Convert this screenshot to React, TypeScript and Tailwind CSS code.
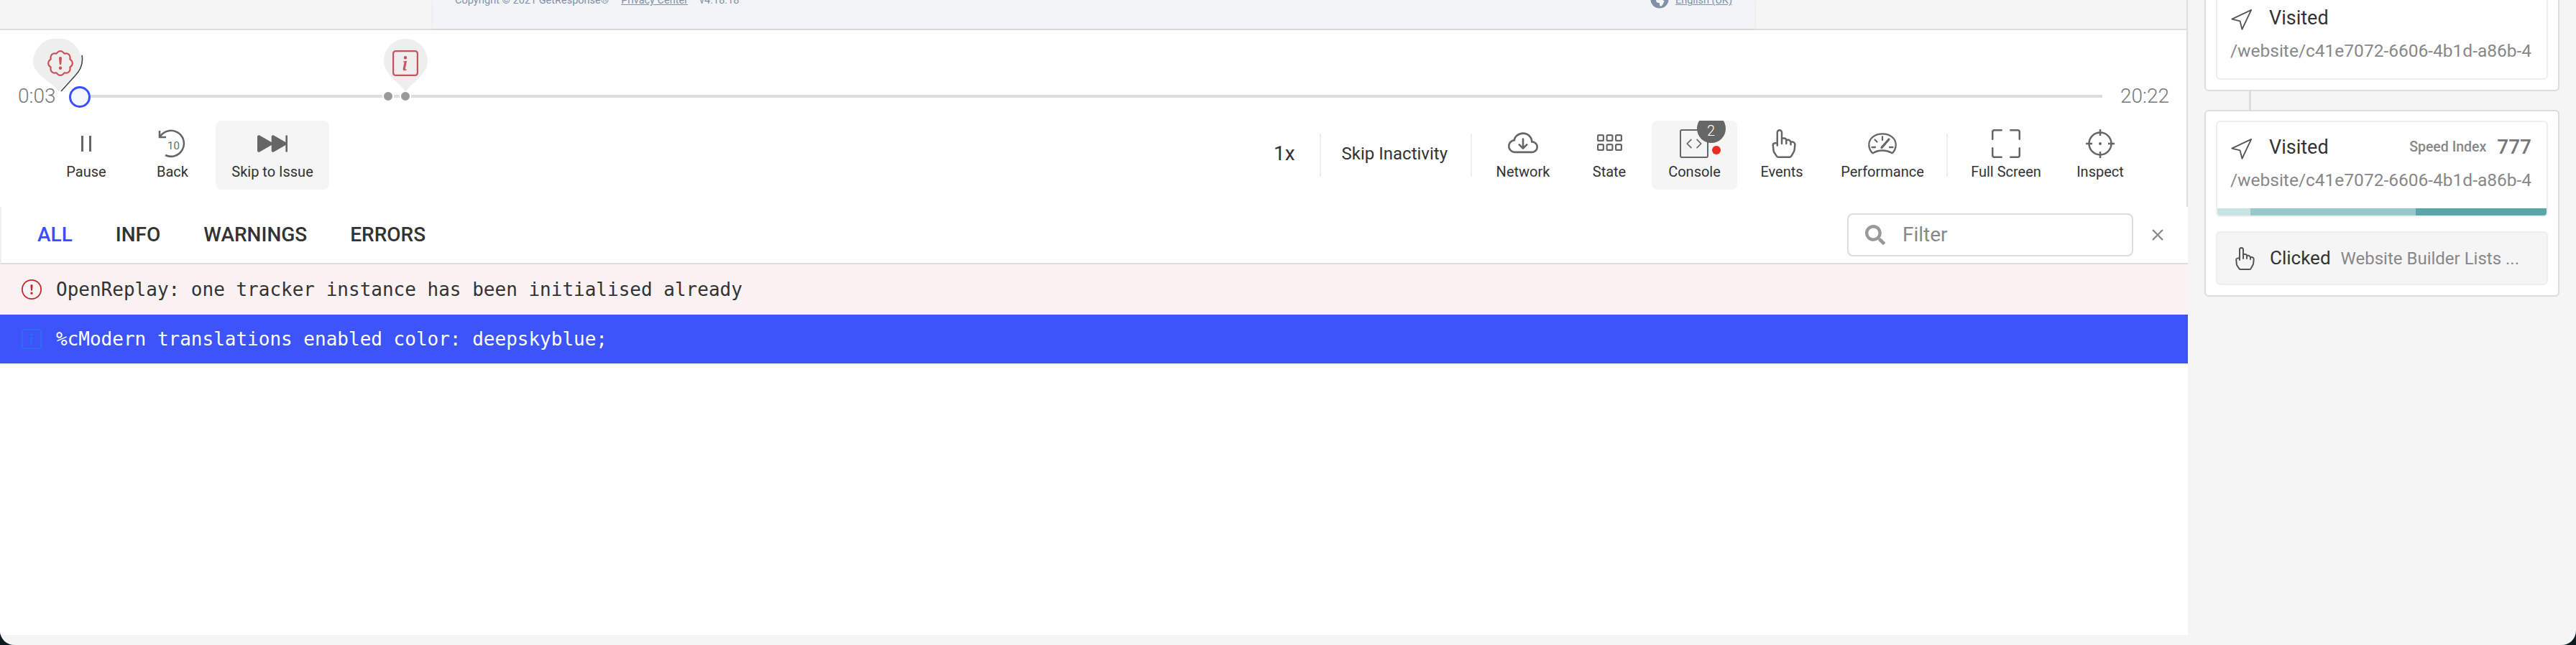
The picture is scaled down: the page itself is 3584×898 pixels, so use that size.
import React from 'react';
import { BsCloudArrowDown, BsCode, BsExclamationCircle, BsFullscreen, BsHandIndex, BsInfoSquare, BsPatchExclamation, BsSkipForwardFill, BsX } from 'react-icons/bs';
import { FaGlobeAfrica, FaSearch } from 'react-icons/fa';
import { Navigation } from 'lucide-react';

const Separator = ({ className }: { className: string }) => <div className={`w-[2px] h-[60px] bg-[#eee] shrink-0 ${className}`} />;

const ControlButton = ({ label, icon, className, active }: { label: string; icon: React.ReactNode; className: string; active?: boolean }) => (
    <div className={`relative overflow-hidden h-[96px] flex flex-col items-center shrink-0 rounded-[8px] ${active ? 'bg-[#f5f5f5]' : ''} ${className}`}>
        <div className="h-[40px] mt-[12px] flex items-center justify-center text-[#666]">{icon}</div>
        <div className="text-[20px] leading-[24px] mt-[7px] text-[#333] whitespace-nowrap">{label}</div>
    </div>
);

const BackIcon = () => (
    <svg width="40" height="40" viewBox="0 0 40 40" fill="none" stroke="#666" strokeWidth="2.6">
        <path d="M2 2v9h9" />
        <path d="M2.5 10.5A18 18 0 1 1 10 36" />
        <text x="21.5" y="28" fontSize="15" fill="#666" stroke="none" textAnchor="middle" fontFamily="Roboto, sans-serif">10</text>
    </svg>
);

const InspectIcon = () => (
    <svg width="40" height="40" viewBox="0 0 40 40" fill="none" stroke="#666" strokeWidth="2.5">
        <circle cx="20" cy="20" r="15.5" />
        <path d="M20 0v9M20 31v9M0 20h9M31 20h9" />
        <circle cx="20" cy="20" r="2" fill="#666" stroke="none" />
    </svg>
);

const StateIcon = () => (
    <svg width="35" height="23" viewBox="0 0 35 23" fill="none" stroke="#666" strokeWidth="2.2" className="-mt-[3px]">
        <rect x="1.1" y="1.1" width="7.8" height="7.8" rx="1.5" />
        <rect x="13.6" y="1.1" width="7.8" height="7.8" rx="1.5" />
        <rect x="26.1" y="1.1" width="7.8" height="7.8" rx="1.5" />
        <rect x="1.1" y="14.1" width="7.8" height="7.8" rx="1.5" />
        <rect x="13.6" y="14.1" width="7.8" height="7.8" rx="1.5" />
        <rect x="26.1" y="14.1" width="7.8" height="7.8" rx="1.5" />
    </svg>
);

const PerformanceIcon = () => (
    <svg width="40" height="30" viewBox="0 0 40 30" fill="none" stroke="#666" strokeWidth="2.3" strokeLinecap="round" className="-mt-[1px]">
        <path d="M5.5 27.5C2.5 24 1.3 20 1.3 16.5 1.3 7.5 9.5 1.3 20 1.3S38.7 7.5 38.7 16.5c0 3.5-1.2 7.5-4.2 11-.6.7-1.6.5-2.4.1C28.5 25.5 24.5 24.5 20 24.5s-8.5 1-12 3.1c-.8.4-1.8.6-2.5-.1Z" />
        <path d="M20 5.5v4.5M9.5 9.5l3 3M5.5 20h4.5M30 20h4.5" />
        <path d="M19 20.5L29 9" strokeWidth="3.2" />
    </svg>
);

const Dot = ({ className }: { className: string }) => <div className={`absolute top-[-6px] w-[16px] h-[16px] rounded-full bg-[#999] border-2 border-white ${className}`} />;

const VisitedHead = ({ children }: { children?: React.ReactNode }) => (
    <div className="pl-[18px] pr-[21px] pt-[18px] shrink-0">
        <div className="h-[34px] flex items-center">
            <Navigation size={34} strokeWidth={1.3} className="text-[#555] shrink-0 -ml-[2px] mt-[6px]" />
            <span className="text-[27px] text-[#333] ml-[22px]">Visited</span>
            {children}
        </div>
        <div className="mt-[12px] h-[34px] leading-[34px] text-[24.5px] text-[#888] whitespace-nowrap overflow-hidden">/website/c41e7072-6606-4b1d-a86b-4</div>
    </div>
);

export default function App() {
    return (
        <div className="w-[3584px] h-[898px] bg-[#0b1a20] overflow-hidden font-['Roboto',sans-serif]">
            <div className="h-full flex bg-[#f5f5f5] rounded-b-[20px] overflow-hidden">
                <div className="w-[3044px] h-[884px] flex flex-col bg-white shrink-0">
                    {/* replayed page, only its footer is visible */}
                    <div className="h-[42px] shrink-0 bg-[#f5f5f5] border-b-2 border-r-2 border-[#ddd] pl-[602px]">
                        <div className="w-[1839px] h-full bg-[#f2f4f8] overflow-hidden shadow-[0_0_4px_rgba(0,0,0,0.08)] flex justify-between items-start pl-[31px] pr-[31px] text-[14.5px] leading-[16px] text-[#8091a5]">
                            <div className="flex -mt-[7px] h-[16px]">
                                <span>Copyright © 2021 GetResponse®</span>
                                <span className="underline ml-[17px]">Privacy Center</span>
                                <span className="ml-[16px]">v4.18.18</span>
                            </div>
                            <div className="flex items-start">
                                <FaGlobeAfrica size={26} className="-mt-[14px]" />
                                <span className="underline ml-[9px] -mt-[7px]">English (UK)</span>
                            </div>
                        </div>
                    </div>

                    {/* player */}
                    <div className="relative h-[246px] shrink-0 border-r-2 border-[#ddd]">
                        <div className="h-[126px] pt-[76px]">
                            <div className="flex items-center h-[32px] pl-[25px] pr-[24px]">
                                <div className="w-[71px] text-[28px] leading-[32px] font-light text-[#777] shrink-0">0:03</div>
                                <div className="w-[30px] h-[30px] rounded-full bg-[#f3f5ff] border-[3px] border-[#394eff] shrink-0 mt-[2px]" />
                                <div className="relative flex-1 h-[4px] bg-[#ddd]">
                                    <Dot className="left-[406px]" />
                                    <Dot className="left-[430px]" />
                                </div>
                                <div className="ml-[25px] text-[28px] leading-[32px] font-light text-[#777] shrink-0">20:22</div>
                            </div>
                        </div>
                        <div className="absolute left-[46px] top-[12px] w-[70px] h-[74px]">
                            <svg width="70" height="74" viewBox="0 0 70 74">
                                <path d="M36 73C28 62 0 50 0 32A33 32 0 0 1 68 32C68 50 44 62 36 73Z" fill="#eee" />
                                <path d="M68 23C70 34 66 44 58 52L39 73" fill="none" stroke="#444" strokeWidth="1.6" />
                            </svg>
                            <BsPatchExclamation size={36} className="absolute left-[20px] top-[16px] text-[#c9535a]" />
                        </div>
                        <div className="absolute left-[534px] top-[12px] w-[61px] h-[74px]">
                            <svg width="61" height="74" viewBox="0 0 61 74">
                                <path d="M30.5 74C24 62 0 50 0 31A30.5 31 0 0 1 61 31C61 50 37 62 30.5 74Z" fill="#eee" />
                            </svg>
                            <BsInfoSquare size={36} className="absolute left-[12px] top-[16px] text-[#c9535a]" />
                        </div>

                        <div className="flex h-[96px] pl-[70px] pr-[61px]">
                            <ControlButton
                                label="Pause"
                                className="w-[100px]"
                                icon={
                                    <div className="flex gap-[8px] h-[22px]">
                                        <div className="w-[3px] bg-[#666]" />
                                        <div className="w-[3px] bg-[#666]" />
                                    </div>
                                }
                            />
                            <ControlButton label="Back" className="w-[88px] ml-[26px]" icon={<BackIcon />} />
                            <ControlButton label="Skip to Issue" className="w-[158px] ml-[16px]" active icon={<BsSkipForwardFill size={42} />} />
                            <div className="flex-1" />
                            <div className="flex items-center h-[96px] pb-[4px] shrink-0">
                                <span className="text-[28px] text-[#333] leading-[32px]">1x</span>
                                <Separator className="ml-[34px] mt-[4px]" />
                                <span className="text-[24px] text-[#333] leading-[32px] ml-[29px]">Skip Inactivity</span>
                                <Separator className="ml-[32px] mt-[4px]" />
                            </div>
                            <ControlButton label="Network" className="w-[118px] ml-[12px]" icon={<BsCloudArrowDown size={42} />} />
                            <ControlButton label="State" className="w-[118px] ml-[2px]" icon={<StateIcon />} />
                            <ControlButton
                                label="Console"
                                className="w-[119px]"
                                active
                                icon={
                                    <div className="relative w-[40px] h-[40px] -ml-[2px] rounded-[3px] border-[2.5px] border-[#666] flex items-center justify-center">
                                        <BsCode size={26} className="text-[#666]" />
                                        <div className="absolute left-[22px] -top-[23px] w-[40px] h-[40px] rounded-full bg-[#666] text-white text-[20px] leading-[46px] text-center font-light">2</div>
                                        <div className="absolute left-[43px] top-[21px] w-[12px] h-[12px] rounded-full bg-[#ee2a20]" />
                                    </div>
                                }
                            />
                            <ControlButton label="Events" className="w-[124px]" icon={<BsHandIndex size={40} />} />
                            <ControlButton label="Performance" className="w-[156px]" icon={<PerformanceIcon />} />
                            <Separator className="ml-[11px] mt-[18px]" />
                            <ControlButton label="Full Screen" className="w-[118px] ml-[22px]" icon={<BsFullscreen size={40} />} />
                            <ControlButton label="Inspect" className="w-[118px] ml-[13px]" icon={<InspectIcon />} />
                        </div>
                    </div>

                    {/* console tabs */}
                    <div className="h-[80px] shrink-0 flex items-center border-l-2 border-b-2 border-[#eee] border-b-[#ddd] pl-[50px] pr-[25px]">
                        <div className="flex gap-[60px] text-[28px] font-medium text-[#333]">
                            <span className="text-[#394eff]">ALL</span>
                            <span>INFO</span>
                            <span>WARNINGS</span>
                            <span>ERRORS</span>
                        </div>
                        <div className="ml-auto w-[398px] h-[60px] border-2 border-[#ddd] rounded-[8px] flex items-center pl-[23px]">
                            <FaSearch size={28} className="text-[#999]" />
                            <span className="ml-[24px] text-[28px] text-[#888]">Filter</span>
                        </div>
                        <BsX size={34} className="ml-[17px] text-[#888]" />
                    </div>

                    {/* console rows */}
                    <div className="h-[70px] shrink-0 bg-[#f9f1f2] flex items-center pl-[30px]">
                        <BsExclamationCircle size={28} className="text-[#c5282a] shrink-0" />
                        <span className="ml-[20px] font-['DejaVu_Sans_Mono',monospace] text-[26px] text-[#333] whitespace-pre">OpenReplay: one tracker instance has been initialised already</span>
                    </div>
                    <div className="h-[68px] shrink-0 bg-[#3c54fa] flex items-center pl-[30px]">
                        <BsInfoSquare size={28} className="text-[#2b6ff0] shrink-0" />
                        <span className="ml-[20px] font-['DejaVu_Sans_Mono',monospace] text-[26px] text-white whitespace-pre">%cModern translations enabled color: deepskyblue;</span>
                    </div>
                    <div className="h-[2px] bg-[#f5f5f5] shrink-0" />
                </div>

                {/* events sidebar */}
                <div className="w-[540px] min-w-0 shrink-0 px-[23px] -mt-[27px]">
                    <div className="h-[154px] bg-white border-2 border-[#ddd] rounded-[6px] px-[14px] pt-[13px]">
                        <div className="h-[123px] border-2 border-[#eee] rounded-[6px] overflow-hidden bg-white">
                            <VisitedHead />
                        </div>
                    </div>
                    <div className="w-[3px] h-[26px] bg-[#ddd] ml-[62px]" />
                    <div className="h-[260px] bg-white border-2 border-[#ddd] rounded-[6px] px-[14px] pt-[13px]">
                        <div className="h-[134px] border-2 border-[#eee] rounded-[6px] overflow-hidden flex flex-col">
                            <VisitedHead>
                                <span className="ml-auto text-[19.5px] font-medium text-[#888]">Speed Index</span>
                                <span className="ml-[15px] text-[28px] font-medium text-[#777]">777</span>
                            </VisitedHead>
                            <div className="mt-auto h-[10px] flex shrink-0">
                                <div className="w-[46px] bg-[#c9e3e3]" />
                                <div className="w-[230px] bg-[#98c8c9]" />
                                <div className="flex-1 bg-[#5ba6a8]" />
                            </div>
                        </div>
                        <div className="mt-[20px] h-[75px] bg-[#f5f5f5] border-2 border-[#eee] rounded-[6px] flex items-center pl-[20px] whitespace-nowrap overflow-hidden">
                            <BsHandIndex size={32} className="text-[#555] shrink-0" />
                            <span className="ml-[21px] text-[26px] text-[#333]">Clicked</span>
                            <span className="ml-[14px] text-[24px] text-[#888]">Website Builder Lists ...</span>
                        </div>
                    </div>
                </div>
            </div>
        </div>
    );
}
